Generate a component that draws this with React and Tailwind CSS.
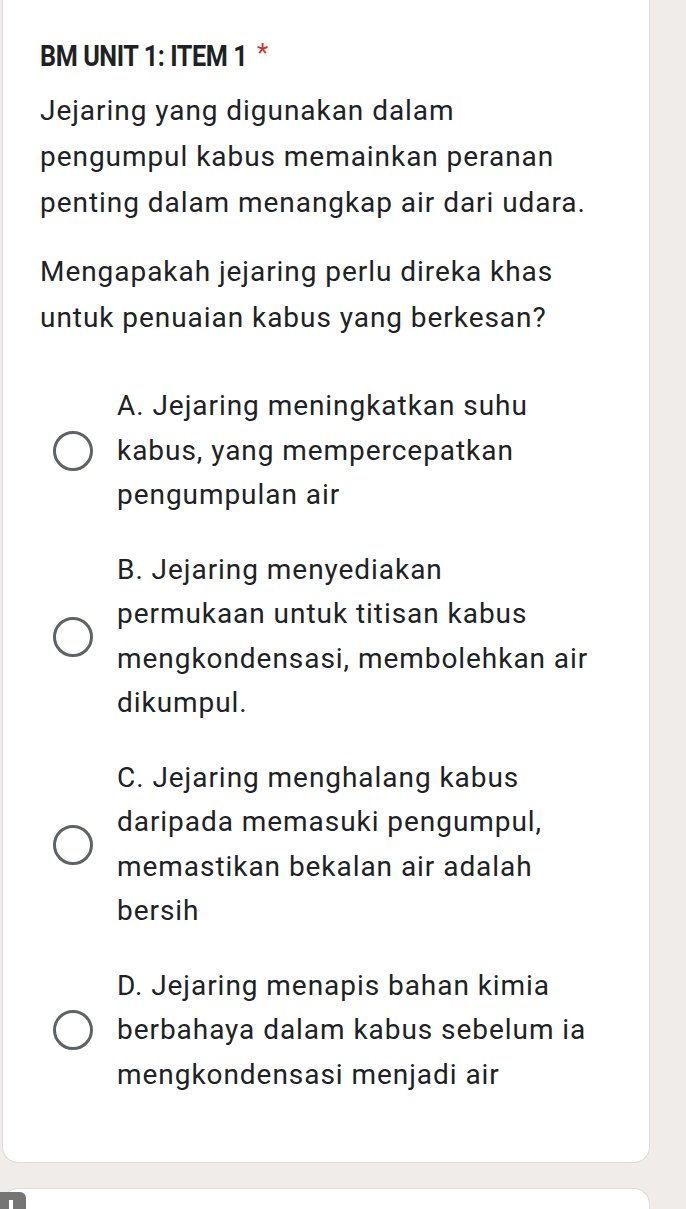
import React from 'react';

const options = [
  'A. Jejaring meningkatkan suhu kabus, yang mempercepatkan pengumpulan air',
  'B. Jejaring menyediakan permukaan untuk titisan kabus mengkondensasi, membolehkan air dikumpul.',
  'C. Jejaring menghalang kabus daripada memasuki pengumpul, memastikan bekalan air adalah bersih',
  'D. Jejaring menapis bahan kimia berbahaya dalam kabus sebelum ia mengkondensasi menjadi air',
];

function Radio() {
  return (
    <div className="w-[40px] h-[40px] rounded-full border-[3.5px] border-[#5f6368] shrink-0" />
  );
}

export default function App() {
  return (
    <div
      className="relative min-h-[1209px] bg-[#f0ecea] overflow-hidden"
      style={{ fontFamily: 'Roboto, "Noto Sans", sans-serif' }}
    >
      {/* Question card */}
      <div className="ml-[2px] w-[648px] bg-white border border-t-0 border-[#dadce0] rounded-b-[16px] pl-[37px] pr-[54px] pt-[38px] pb-[65px] text-[#202124]">
        <div className="flex items-start h-[36px]">
          <span className="inline-block origin-left scale-x-[0.84] text-[30px] font-bold leading-[36px] tracking-[-0.5px] whitespace-nowrap w-[205px]">
            BM UNIT 1: ITEM 1
          </span>
          <span className="ml-[12px] text-[#d93025] text-[26px] leading-[30px]">*</span>
        </div>

        <div className="mt-[14px] text-[28px] leading-[46px] tracking-[0.95px]">
          <p>Jejaring yang digunakan dalam pengumpul kabus memainkan peranan penting dalam menangkap air dari udara.</p>
          <p className="mt-[23px]">Mengapakah jejaring perlu direka khas untuk penuaian kabus yang berkesan?</p>
        </div>

        <div className="mt-[43px] flex flex-col gap-[30px]">
          {options.map((opt) => (
            <div key={opt} className="flex items-center">
              <div className="ml-[13px]">
                <Radio />
              </div>
              <p className="ml-[24px] text-[28px] leading-[44.5px] tracking-[0.95px]">{opt}</p>
            </div>
          ))}
        </div>
      </div>

      {/* Next card */}
      <div className="mt-[25px] ml-[2px] w-[648px] h-[40px] bg-white border border-b-0 border-[#dadce0] rounded-t-[16px]" />
      <div className="absolute left-0 top-[1192px] w-[26px] h-[20px] rounded-tr-[6px] bg-[#757575]">
        <div className="ml-[9px] mt-[8px] w-[4px] h-[12px] bg-white" />
      </div>
    </div>
  );
}
